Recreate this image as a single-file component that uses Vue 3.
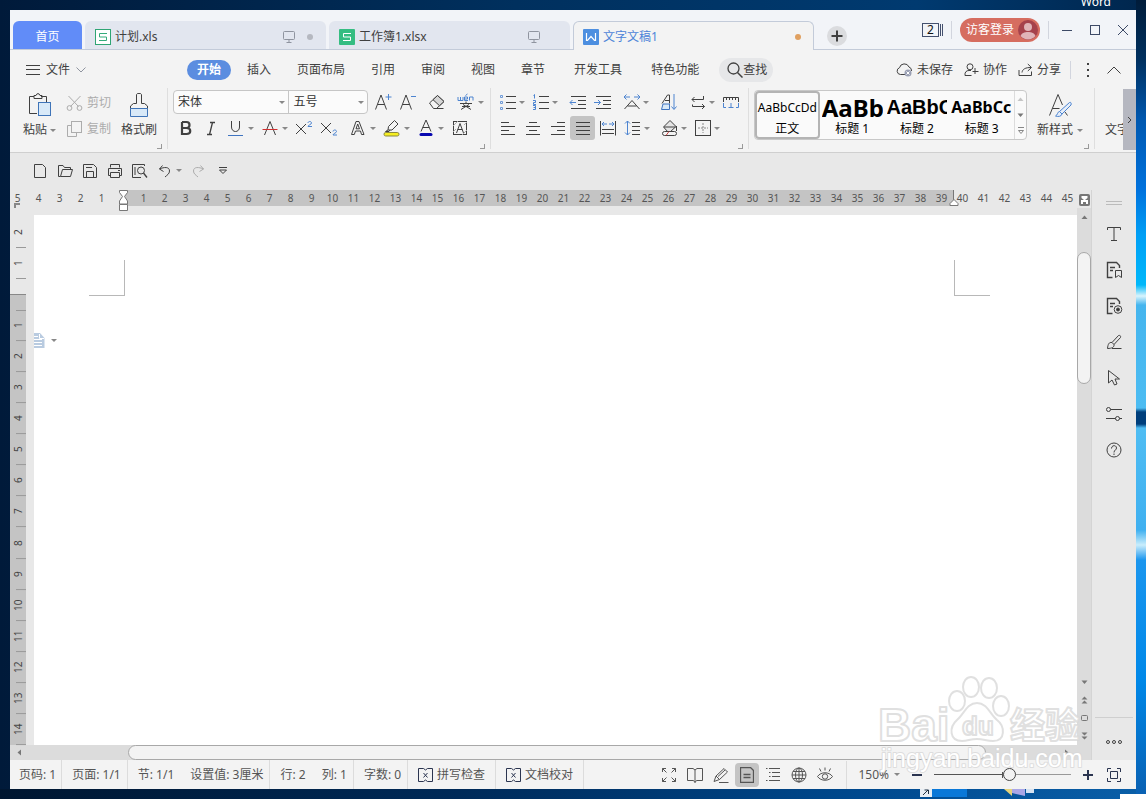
<script setup>
import { h, ref } from 'vue';

// [width, height, markup]
const icons = {
  xls: [16, 16, '<rect x=".5" y=".5" width="15" height="15" fill="#fff" stroke="#2fa574"/><path d="M12 4.5H4.5V8H11.5V11.5H4" stroke="#35ab7b"/>'],
  xlsx: [16, 16, '<rect width="16" height="16" rx="1" fill="#35bd82" stroke="none"/><path d="M12 4.5H4.5V8H11.5V11.5H4" stroke="#fff"/>'],
  doc: [16, 16, '<rect width="16" height="16" rx="1" fill="#4d8fe0" stroke="none"/><path d="M3.500 4V11.500H4.500L8 7.500L11.500 11.500H12.500V4" stroke="#fff" stroke-width="1.200"/>'],
  screen: [12, 12, '<rect x=".5" y=".5" width="11" height="8" rx="1"/><path d="M6 8.500V11.500M3.500 11.500H8.500"/>'],
  plus: [12, 12, '<path d="M6 .5V11.500M.5 6H11.500" stroke-width="2"/>'],
  user: [20, 20, '<circle cx="10" cy="10" r="10" fill="#a6424c" stroke="none"/><circle cx="10" cy="7" r="4" fill="#e0b4b8" stroke="none"/><path d="M2.500 16C4 10.500 16 10.500 17.500 16A10 10 0 0 1 2.500 16" fill="#e0b4b8" stroke="none"/>'],
  min: [10, 12, '<path d="M0 6.500H10"/>'],
  max: [10, 12, '<rect x=".5" y="1.500" width="9" height="9"/>'],
  close: [12, 12, '<path d="M1 1L11 11M11 1L1 11"/>'],
  menu: [14, 12, '<path d="M0 1.500H14M0 5.500H14M0 10.500H14"/>'],
  down: [10, 6, '<path d="M.5 .5L5 5L9.500 .5"/>'],
  up: [14, 8, '<path d="M.5 7.500L7 1L13.500 7.500"/>'],
  search: [16, 16, '<circle cx="6.500" cy="6.500" r="5.500" stroke-width="1.300"/><path d="M10.500 10.500L15.500 15.500" stroke-width="1.500"/>'],
  cloud: [17, 15, '<path d="M9 12.500H4.500A3.500 3.500 0 0 1 3.500 5.700A5 5 0 0 1 13 5A3.800 3.800 0 0 1 15.500 9"/><circle cx="12" cy="11" r="3.500" fill="#9aa0b4" stroke="none"/><path d="M10.500 9.500L13.500 12.500M13.500 9.500L10.500 12.500" stroke="#fff"/>'],
  collab: [15, 14, '<circle cx="6" cy="3.800" r="3"/><path d="M7.500 12.500H1C.5 9 2.500 7.500 5 7.500H7M11 5V11M8.500 8.500H14.500"/>'],
  share: [15, 14, '<path d="M1 7V12.500H13.500V8.500M4 9.500C4.500 6 7.500 4.500 13 4.500M9.800 1L13.500 4.500L9.800 8"/>'],
  more: [4, 14, '<path d="M1 1H3M1 7H3M1 13H3" stroke-width="2"/>'],
  paste: [24, 24, '<path d="M9 20.500H1.500V3.500H6M13 3.500H18.500V9"/><path d="M6 5.500V2.500H8L9 .8H11L12 2.500H14V5.500Z"/><rect x="10.500" y="9.500" width="12" height="13" fill="#d8e9f8" stroke="#3f74b8"/>'],
  cut: [18, 16, '<path d="M2.500 1L12.500 11.500M14.500 1L4.500 11.500"/><circle cx="3.500" cy="13" r="2.400"/><circle cx="13.500" cy="13" r="2.400"/>'],
  copy: [16, 16, '<path d="M5 4.500H1.500V15.500H10.500V11.500"/><rect x="5.500" y=".5" width="10" height="11"/>'],
  brush: [20, 24, '<path d="M7.500 10.500V1.500C7.500 0 12.500 0 12.500 1.500V10.500H15.500L18.500 13V15.500H1.500V13L4.500 10.500Z"/><path d="M1.500 15.500H18.500V23.500H1.500Z" fill="#d8e9f8" stroke="#3f74b8"/>'],
  bold: [14, 16, '<path d="M3 2V14H7.500C12.500 14 12.500 8 7.500 8H3M7.500 8C11.500 8 11.500 2 7.500 2H3" stroke-width="2.200"/>'],
  italic: [14, 16, '<path d="M6 2.500H11M3 14.500H8M8.500 2.500L5.500 14.500" stroke-width="1.300"/>'],
  underline: [16, 16, '<path d="M3.500 1V7C3.500 13 11.500 13 11.500 7V1"/><path d="M0 15.500H15" stroke="#3f74c0"/>'],
  strike: [16, 16, '<path d="M2.500 15L8 1.500L13.500 15"/><path d="M.5 9.500H15.500" stroke="#d03030"/>'],
  sup: [18, 16, '<path d="M1 4L11 14M11 4L1 14"/><path d="M13 3C13 1 16.500 1 16.500 3C16.500 4.500 13 5 13 6.500H17" stroke="#4d84d0"/>'],
  sub: [18, 16, '<path d="M1 3L11 13M11 3L1 13"/><path d="M13 11.500C13 9.500 16.500 9.500 16.500 11.500C16.500 13 13 13.500 13 15H17" stroke="#4d84d0"/>'],
  outlineA: [16, 16, '<path d="M1.500 14.500L6 1.500H9L14 14.500H11.500L10.500 11H5.500L4.300 14.500ZM6 8.800H9.500L7.700 4Z"/>'],
  marker: [18, 18, '<path d="M5.500 7.500L11.500 1.500L15 5L9 11H5ZM5 11L2.500 12.500H6L7 11"/><rect x="1" y="13.500" width="15" height="3.500" rx="1.700" fill="#f6ee20" stroke="#8b8940"/>'],
  colorA: [16, 18, '<path d="M3 12.500L8 1L13 12.500M4.800 8.500H11.200"/><rect x="1.500" y="14" width="13" height="3" rx="1.500" fill="#0808b0" stroke="none"/>'],
  boxA: [16, 16, '<rect x="1.500" y="1.500" width="13" height="13"/><path d="M1 6L6 1M10 15L15 10M1 12L4 9M12 5L15 2" stroke="#aaa"/><path d="M4.500 13L8 3.500L11.500 13M5.700 9.500H10.300"/>'],
  grow: [18, 18, '<path d="M1.500 16.500L7 2L12.500 16.500M3.500 11.500H10.500"/><path d="M14.500 1V7M11.500 4H17.500" stroke="#4d84d0"/>'],
  shrink: [18, 18, '<path d="M1.500 16.500L7 2L12.500 16.500M3.500 11.500H10.500"/><path d="M12 3.500H17" stroke="#4d84d0"/>'],
  eraser: [18, 16, '<path d="M1.500 9L9.500 1.500L16 7.500L8.500 14.500H5.500Z"/><path d="M9.500 1.500L16 7.500L11.500 11.700L5 5.700Z" fill="#d5d5d5"/><path d="M8 14.500H15.500"/>'],
  pinyin: [18, 18, '<path d="M1 4V7.500H6V4M3.500 4V7.500M7.500 6H10.500V4H7.500V7.500H11M8.500 2.500L10.500 1M12.500 7.500V4H16V7.500" stroke="#4d84d0"/><path d="M3 10.500H15M9 8.500V10.500M4 16.500L12 11.500M14 16.500L6 11.500M5 13.500H13"/>'],
  bullets: [18, 16, '<path d="M7 2.500H17M7 8.500H17M7 14.500H17" stroke-width="1.200"/><path d="M1.500 1.500H3.500V3.500H1.500ZM1.500 7.500H3.500V9.500H1.500ZM1.500 13.500H3.500V15.500H1.500Z" stroke="#6f9bd8"/>'],
  numbers: [18, 16, '<path d="M7 2.500H17M7 8.500H17M7 14.500H17" stroke-width="1.200"/><path d="M1.500 1.500L2.500 .5V4.500M1 6.500H3.500V8.500H1.500V10.500H4M1 11.500H3.500V15.500H1M1.500 13.500H3.500" stroke="#4d84d0"/>'],
  outdent: [18, 16, '<path d="M2 2.500H17M9 6.500H17M9 10.500H17M2 14.500H17" stroke-width="1.200"/><path d="M7 8.500H1M3.500 6L1 8.500L3.500 11" stroke="#4d84d0"/>'],
  indent: [18, 16, '<path d="M2 2.500H17M9 6.500H17M9 10.500H17M2 14.500H17" stroke-width="1.200"/><path d="M0 8.500H6.500M4 6L6.500 8.500L4 11" stroke="#4d84d0"/>'],
  charScale: [18, 16, '<path d="M1.500 15L9 6.500L16.500 15M4.500 12H13.500"/><path d="M1 3H7M3.500 .5L1 3L3.500 5.500M17 3H11M14.500 .5L17 3L14.500 5.500" stroke="#4d84d0"/>'],
  sort: [18, 18, '<path d="M2 10.500L7.500 2H9.500V10.500M5 7.500H9.500"/><path d="M3 11H9.500V16.500H1.500Z" stroke="#3f74c0" fill="#d8e9f8"/><path d="M14 1V16M11.500 13.500L14 16.500L16.500 13.500" stroke="#4d84d0"/>'],
  wrap: [16, 16, '<path d="M13.500 2V5.500H2M4.500 3L2 5.500L4.500 8M2.500 10.500V12.500H14.500M12 10L14.500 12.500L12 15"/>'],
  tabs: [18, 14, '<path d="M1.500 7V2.500H16.500V7M4.500 3V5M7.500 3V5M10.500 3V5M13.500 3V5"/><path d="M1.500 8V12.500H4M16.500 8V12.500H14M9 8V12.500M6.500 12.500H11.500" stroke="#4d84d0"/>'],
  left: [16, 16, '<path d="M1 2.500H9M1 6.500H15M1 10.500H9M1 14.500H15" stroke-width="1.200"/>'],
  center: [16, 16, '<path d="M4 2.500H12M1 6.500H15M4 10.500H12M1 14.500H15" stroke-width="1.200"/>'],
  right: [16, 16, '<path d="M7 2.500H15M1 6.500H15M7 10.500H15M1 14.500H15" stroke-width="1.200"/>'],
  justify: [16, 16, '<path d="M1 2.500H15M1 6.500H15M1 10.500H15M1 14.500H15" stroke-width="1.200"/>'],
  distribute: [18, 16, '<path d="M1.500 1V15.500M16.500 1V15.500M3 9.500H15M3 13.500H15"/><path d="M3.500 4H8M5 2L3 4L5 6M14.500 4H10M13 2L15 4L13 6" stroke="#4d84d0"/>'],
  spacing: [18, 16, '<path d="M8 2.500H16M8 6.500H16M8 10.500H16M8 14.500H16" stroke-width="1.200"/><path d="M3.500 1V15M1 3.500L3.500 1L6 3.500M1 12.500L3.500 15L6 12.500" stroke="#4d84d0"/>'],
  fill: [18, 18, '<path d="M2.500 8L9 1.500L15 7.500L9 13H7Z" fill="#e4e4e4"/><path d="M3 8H14.500"/><rect x="1.500" y="12.500" width="14" height="4" rx="2" fill="#f3f3f3"/><path d="M5 16.500L8 12.500" stroke="#c44"/><path d="M15.500 7V12"/>'],
  borders: [16, 16, '<rect x=".5" y=".5" width="15" height="15"/><path d="M8 3V13M3 8H13" stroke="#888" stroke-dasharray="2 1"/>'],
  newStyle: [26, 24, '<path d="M2.500 22.500L11 1.500L15.500 12M5.500 15.500H12.500M18 19L20.500 22.500"/><path d="M22.500 9.500L12.500 18.500L15 21L24 12C24.500 10 24 9 22.500 9.500M12.500 18.500C10 19 11 22 8.500 23C11 24 14.500 23.500 15 21" stroke="#4d84d0" fill="#e6eefa"/>'],
  newDoc: [14, 16, '<path d="M1.500 1.500V14.500H12.500V4.500L9.500 1.500H1.500Z" stroke-linejoin="round"/>'],
  open: [16, 16, '<path d="M3.500 13.500H1.500V2.500H6L7.500 4.500H13.500V6.500M3.500 13.500L5.500 6.500H15.500L13.500 13.500Z"/>'],
  save: [16, 16, '<path d="M1.500 1.500H11.500L14.500 4.500V14.500H1.500ZM4.500 14V8.500H11.500V14M4 4.500H10"/>'],
  print: [16, 16, '<path d="M3.500 4.500V1.500H12.500V4.500M3.500 12.500H1.500V5.500H14.500V12.500H12.500M3.500 9.500H12.500V14.500H3.500ZM11 7.500H13"/>'],
  preview: [18, 16, '<path d="M10 14.500H1.500V1.500H13.500V3M4 4V12"/><circle cx="10" cy="7.500" r="3.500"/><path d="M12.500 10L16 14.500" stroke-width="1.300"/>'],
  undo: [14, 14, '<path d="M4.500 1.500L1.500 5L5.500 7.500M1.500 5C6 3 11.500 2.500 11.500 7C11.500 10 9 11 7 13"/>'],
  redo: [14, 14, '<path d="M9.500 1.500L12.500 5L8.500 7.500M12.500 5C8 3 2.500 2.500 2.500 7C2.500 10 5 11 7 13"/>'],
  customize: [10, 8, '<path d="M1 .5H9M1.500 3L5 6.500L8.500 3Z"/>'],
  hourglass: [11, 22, '<path d="M1.500 .5H9.500V2.500L6.500 6.500L9.500 11V14H1.500V11L4.500 6.500L1.500 2.500ZM1.500 14.500H9.500V20.500H1.500Z" fill="#fff" stroke="#777"/>'],
  rightIndent: [10, 17, '<path d="M4.500 0V10" stroke="#777"/><path d="M1 15.500V13.500L5 9.500L9 13.500V15.500Z" fill="#fff" stroke="#777"/>'],
  tabStop: [7, 5, '<path d="M1 5V1H6" stroke="#888" stroke-width="2"/>'],
  rulerToggle: [11, 12, '<rect x=".5" y=".5" width="10" height="11" rx="1" fill="#777" stroke="#777"/><path d="M2.500 2H8.500V4L6 6H9V10H7V8H4V10H2V6H5L2.500 4Z" fill="#fff" stroke="none"/>'],
  pasteOpt: [11, 15, '<path d="M0 0H6L10.500 5V15H0Z" fill="#b9cbe0" stroke="none"/><path d="M0 3.500H4M0 6.500H8M0 9.500H8M0 12.500H8M5.500 1V5.500H10" stroke="#fff"/>'],
  text: [16, 16, '<path d="M1.500 4V1.500H14.500V4M8 1.500V14.500M5 14.500H11"/>'],
  bookmark: [18, 18, '<path d="M7.500 16.500H2.500V1.500H11.500L14.500 4.500V7M5 6.500H10M5 9.500H8" stroke-width="1.400"/><path d="M10.500 9.500H16.500V16.500L13.500 14.500L10.500 16.500Z"/>'],
  record: [18, 18, '<path d="M7.500 16.500H2.500V1.500H11.500L14.500 4.500V7M5 6.500H10M5 9.500H8" stroke-width="1.400"/><circle cx="13" cy="12.500" r="3.800"/><circle cx="13" cy="12.500" r="1.500" fill="#333"/>'],
  paint: [18, 16, '<path d="M7 8.500L13.500 1.500C15 1 16 2 15.500 3.500L9 10.500ZM7 8.500C4 8 3 10 2.500 14.500C7 14.500 9.500 13 9 10.500M7 14.500H16.500"/>'],
  pointer: [14, 18, '<path d="M1.500 1.500V14L5 11L7.500 16L10 15L8 10H12.500Z"/>'],
  sliders: [18, 16, '<circle cx="3.500" cy="3.500" r="2"/><circle cx="12.500" cy="12.500" r="2"/><path d="M5.500 3.500H17M1 12.500H10.500M14.500 12.500H17"/>'],
  help: [16, 16, '<circle cx="8" cy="8" r="7"/><path d="M5.500 6.500C5.500 2.800 10.500 2.800 10.500 6C10.500 8 8 8 8 10.500M8 11.500V13"/>'],
  dots: [18, 6, '<circle cx="3" cy="3" r="1.500"/><circle cx="9" cy="3" r="1.500"/><circle cx="15" cy="3" r="1.500"/>'],
  spell: [15, 16, '<path d="M5.500 1.500H.5V14.500H5.500L7.500 13L9.500 14.500H14.500V1.500H9.500L7.500 3L5.500 1.500M5.500 6L9.500 10.500M9.500 6L5.500 10.500" stroke="#2b3550"/>'],
  fullscreen: [16, 16, '<path d="M1.500 5V1.500H5M11 1.500H14.500V5M14.500 11V14.500H11M5 14.500H1.500V11M1.500 1.500L5.500 5.500M14.500 1.500L10.500 5.500M14.500 14.500L10.500 10.500M1.500 14.500L5.500 10.500"/>'],
  book: [16, 16, '<path d="M8 3V15.500L6.500 13.500H.5V1.500H6L8 3L10 1.500H15.500V13.500H9.500L8 15.500"/>'],
  pen: [18, 16, '<path d="M2 14.500L4 9L12 1.500L15.500 5L7.500 12.500ZM4 9L7.500 12.500M6 9.500L13 3M7 15.500H16.500"/>'],
  pageView: [14, 16, '<path d="M.5 .5H10.500L13.500 3.500V15.500H.5ZM3.500 7.500H10.500M3.500 10.500H10.500" stroke-width="1.300"/>'],
  outline: [16, 16, '<path d="M4 1.500H15M7 5.500H15M7 9.500H15M4 13.500H15M1 1.500H2.500M4 5.500H5.500M4 9.500H5.500M1 13.500H2.500"/>'],
  globe: [16, 16, '<circle cx="8" cy="8" r="7"/><ellipse cx="8" cy="8" rx="3.500" ry="7"/><path d="M1 8H15M8 1V15M2 4.500H14M2 11.500H14"/>'],
  eye: [18, 18, '<path d="M1.500 10.500C5 5.500 13 5.500 16.500 10.500C13 15.500 5 15.500 1.500 10.500ZM9 1.500V4.500M3.500 2.500L5 5.500M14.500 2.500L13 5.500"/><circle cx="9" cy="10.500" r="2.700"/>'],
  fit: [14, 14, '<path d="M.5 4V.5H4M10 .5H13.500V4M13.500 10V13.500H10M4 13.500H.5V10M3.500 3.500H10.500V10.500H3.500Z"/>'],
  zoomOut: [10, 12, '<path d="M0 6H10" stroke-width="2"/>'],
  zoomIn: [10, 12, '<path d="M0 6H10M5 1V11" stroke-width="2"/>'],
  arrowUp: [7, 6, '<path d="M.5 5L3.500 1.500L6.500 5Z" fill="#777" stroke="none"/>'],
  arrowDown: [7, 6, '<path d="M.5 1.500L3.500 5L6.500 1.500Z" fill="#777" stroke="none"/>'],
  arrowLeft: [6, 7, '<path d="M5 .5L1.500 3.500L5 6.500Z" fill="#777" stroke="none"/>'],
  arrowRight: [6, 7, '<path d="M1 .5L4.500 3.500L1 6.500Z" fill="#777" stroke="none"/>'],
  prevPage: [7, 8, '<path d="M.5 3.500L3.500 .5L6.500 3.500ZM.5 7.500L3.500 4.500L6.500 7.500Z" fill="#777" stroke="none"/>'],
  nextPage: [7, 8, '<path d="M.5 .5L3.500 3.500L6.500 .5ZM.5 4.500L3.500 7.500L6.500 4.500Z" fill="#777" stroke="none"/>'],
  browse: [7, 8, '<rect x=".5" y="1.500" width="6" height="5" rx="1" stroke="#777"/>'],
  galleryMore: [8, 8, '<path d="M1 .5H7M1.500 3.500H6.500L4 6.500Z" stroke="#888"/>'],
  expand: [5, 8, '<path d="M1 1L4 4L1 7"/>'],
};

const Icon = (props) => {
  const [width, height, innerHTML] = icons[props.name];
  return h('svg', {
    class: 'icon',
    width,
    height,
    viewBox: `0 0 ${width} ${height}`,
    fill: 'none',
    stroke: 'currentColor',
    'aria-hidden': true,
    innerHTML,
  });
};
Icon.props = ['name'];

const menus = ['开始', '插入', '页面布局', '引用', '审阅', '视图', '章节', '开发工具', '特色功能'];
const activeMenu = ref('开始');

const fontRow1 = [
  { icon: 'grow', label: '增大字号' },
  { icon: 'shrink', label: '减小字号' },
  { icon: 'eraser', label: '清除格式', gap: true },
  { icon: 'pinyin', label: '拼音指南', caret: true, gap: true },
];
const fontRow2 = [
  { icon: 'bold', label: '加粗' },
  { icon: 'italic', label: '倾斜' },
  { icon: 'underline', label: '下划线', caret: true },
  { icon: 'strike', label: '删除线', caret: true },
  { icon: 'sup', label: '上标' },
  { icon: 'sub', label: '下标' },
  { icon: 'outlineA', label: '文字效果', caret: true, gap: true },
  { icon: 'marker', label: '突出显示', caret: true },
  { icon: 'colorA', label: '字体颜色', caret: true },
  { icon: 'boxA', label: '字符底纹' },
];
const paraRow1 = [
  { icon: 'bullets', label: '项目符号', caret: true },
  { icon: 'numbers', label: '编号', caret: true },
  { icon: 'outdent', label: '减少缩进量', gap: true },
  { icon: 'indent', label: '增加缩进量' },
  { icon: 'charScale', label: '中文版式', caret: true, gap: true },
  { icon: 'sort', label: '排序', gap: true },
  { icon: 'wrap', label: '显示段落标记', caret: true, gap: true },
  { icon: 'tabs', label: '制表位' },
];
const paraRow2 = [
  { icon: 'left', label: '左对齐' },
  { icon: 'center', label: '居中' },
  { icon: 'right', label: '右对齐' },
  { icon: 'justify', label: '两端对齐', active: true },
  { icon: 'distribute', label: '分散对齐' },
  { icon: 'spacing', label: '行距', caret: true },
  { icon: 'fill', label: '底纹', caret: true, gap: true },
  { icon: 'borders', label: '边框', caret: true },
];
const styleList = [
  { name: '正文', sample: 'AaBbCcDd', cls: 'body' },
  { name: '标题 1', sample: 'AaBb', cls: 'h1' },
  { name: '标题 2', sample: 'AaBbC', cls: 'h2' },
  { name: '标题 3', sample: 'AaBbCc', cls: 'h3' },
];
const quick = [
  { icon: 'newDoc', label: '新建' },
  { icon: 'open', label: '打开' },
  { icon: 'save', label: '保存' },
  { icon: 'print', label: '打印' },
  { icon: 'preview', label: '打印预览' },
  { icon: 'undo', label: '撤销', caret: true },
  { icon: 'redo', label: '恢复', disabled: true },
  { icon: 'customize', label: '自定义' },
];
const sideTools = [
  { icon: 'text', label: '文字' },
  { icon: 'bookmark', label: '书签' },
  { icon: 'record', label: '属性' },
  { icon: 'paint', label: '样式' },
  { icon: 'pointer', label: '选择' },
  { icon: 'sliders', label: '设置' },
  { icon: 'help', label: '帮助' },
];
const views = [
  { icon: 'fullscreen', label: '全屏' },
  { icon: 'book', label: '阅读版式' },
  { icon: 'pen', label: '写作模式' },
  { icon: 'pageView', label: '页面视图', active: true },
  { icon: 'outline', label: '大纲' },
  { icon: 'globe', label: 'Web 版式' },
  { icon: 'eye', label: '护眼模式' },
];

const rulerMarks = [5, 4, 3, 2, 1, ''];
for (let i = 1; i <= 45; i++) rulerMarks.push(i);

const zoom = ref(56);
</script>

<template>
  <div class="desktop">
    <span class="desk-label">Word</span>
    <svg class="desk-icons" width="226" height="10" viewBox="0 0 226 10" aria-hidden="true">
      <rect x="12" width="35" height="8" fill="#0a78d8" />
      <rect x="0" width="12" height="8" fill="#e8eef4" />
      <path d="M3 6L8 1M4.500 1H8.500V5" stroke="#234" fill="none" />
      <path d="M84 0L92 7V0Z" fill="#e5d37a" />
      <path d="M92 0H105V7L92 4Z" fill="#a9a6e6" />
      <path d="M106 0H114V4H106Z" fill="#d5e2f2" />
      <rect x="200" y="5" width="26" height="5" fill="#fff" />
    </svg>

    <div class="window">
      <header class="titlebar">
        <nav class="tabs">
          <button class="tab home">首页</button>
          <button class="tab">
            <Icon name="xls" /><span class="tab-name">计划.xls</span>
            <Icon name="screen" class="faint" /><i class="dot"></i>
          </button>
          <button class="tab">
            <Icon name="xlsx" /><span class="tab-name">工作簿1.xlsx</span>
            <Icon name="screen" class="faint no-dot" />
          </button>
          <button class="tab current">
            <Icon name="doc" /><span class="tab-name">文字文稿1</span>
            <i class="dot orange"></i>
          </button>
          <button class="add" aria-label="新建标签"><Icon name="plus" /></button>
        </nav>
        <div class="win-tools">
          <button class="count"><b>2</b><i></i><i></i></button>
          <span class="bar"></span>
          <button class="login">访客登录<Icon name="user" /></button>
          <span class="bar"></span>
          <button class="win-btn" aria-label="最小化"><Icon name="min" /></button>
          <button class="win-btn" aria-label="最大化"><Icon name="max" /></button>
          <button class="win-btn" aria-label="关闭"><Icon name="close" /></button>
        </div>
      </header>

      <div class="menubar">
        <button class="file"><Icon name="menu" />文件<Icon name="down" class="faint" /></button>
        <nav class="menus">
          <button
            v-for="m in menus"
            :key="m"
            class="menu"
            :class="{ on: m === activeMenu, long: m === '开发工具' || m === '特色功能' }"
            @click="activeMenu = m"
          >{{ m }}</button>
        </nav>
        <button class="find"><Icon name="search" />查找</button>
        <div class="menu-right">
          <button><Icon name="cloud" />未保存</button>
          <button><Icon name="collab" />协作</button>
          <button><Icon name="share" />分享</button>
          <span class="bar"></span>
          <button class="dots" aria-label="更多"><Icon name="more" /></button>
          <button aria-label="折叠功能区"><Icon name="up" /></button>
        </div>
      </div>

      <div class="ribbon">
        <section class="group clip">
          <div class="group-body">
            <button class="big"><Icon name="paste" /><span>粘贴<i class="caret"></i></span></button>
            <div class="stack">
              <button disabled><Icon name="cut" />剪切</button>
              <button disabled><Icon name="copy" />复制</button>
            </div>
            <button class="big"><Icon name="brush" /><span>格式刷</span></button>
          </div>
          <i class="launcher"></i>
        </section>

        <section class="group font">
          <div class="rows">
            <div class="row">
              <div class="combo">
                <div class="drop family">
                  <select aria-label="字体"><option>宋体</option></select><i class="caret"></i>
                </div>
                <div class="drop size">
                  <select aria-label="字号"><option>五号</option></select><i class="caret"></i>
                </div>
              </div>
              <button v-for="t in fontRow1" :key="t.icon" class="tool" :class="{ wide: t.caret, gap: t.gap }" :aria-label="t.label">
                <Icon :name="t.icon" /><i v-if="t.caret" class="caret"></i>
              </button>
            </div>
            <div class="row">
              <button v-for="t in fontRow2" :key="t.icon" class="tool" :class="{ wide: t.caret, gap: t.gap }" :aria-label="t.label">
                <Icon :name="t.icon" /><i v-if="t.caret" class="caret"></i>
              </button>
            </div>
          </div>
          <i class="launcher"></i>
        </section>

        <section class="group para">
          <div class="rows">
            <div v-for="(r, n) in [paraRow1, paraRow2]" :key="n" class="row">
              <button
                v-for="t in r"
                :key="t.icon"
                class="tool"
                :class="{ wide: t.caret, gap: t.gap, active: t.active }"
                :aria-label="t.label"
              >
                <Icon :name="t.icon" /><i v-if="t.caret" class="caret"></i>
              </button>
            </div>
          </div>
          <i class="launcher"></i>
        </section>

        <section class="group styles">
          <div class="group-body">
            <div class="gallery">
              <button v-for="s in styleList" :key="s.name" class="style" :class="s.cls">
                <span class="sample">{{ s.sample }}</span>
                <span class="style-name">{{ s.name }}</span>
              </button>
              <div class="gallery-nav">
                <button aria-label="上一行" disabled><Icon name="arrowUp" /></button>
                <button aria-label="下一行"><Icon name="arrowDown" /></button>
                <button aria-label="全部样式"><Icon name="galleryMore" /></button>
              </div>
            </div>
            <button class="big new-style"><Icon name="newStyle" /><span>新样式<i class="caret"></i></span></button>
          </div>
          <i class="launcher"></i>
        </section>

        <section class="group last"><span>文字</span></section>
        <button class="scroll-ribbon" aria-label="向右滚动"><Icon name="expand" /></button>
      </div>

      <div class="quickbar">
        <button v-for="q in quick" :key="q.icon" class="tool" :class="{ wide: q.caret }" :disabled="q.disabled" :aria-label="q.label">
          <Icon :name="q.icon" /><i v-if="q.caret" class="caret"></i>
        </button>
      </div>

      <main class="editor">
        <div class="sheet">
          <div class="ruler">
            <span v-for="(n, i) in rulerMarks" :key="i">{{ n }}</span>
            <Icon name="tabStop" class="tab-stop" />
            <Icon name="hourglass" class="indent-left" />
            <Icon name="rightIndent" class="indent-right" />
          </div>
          <div class="canvas">
            <div class="vruler">
              <span>2</span><span>1</span>
              <div class="vruler-text"><span v-for="n in 14" :key="n">{{ n }}</span></div>
            </div>
            <div class="page">
              <div class="corners"><i class="corner"></i><i class="corner end"></i></div>
              <button class="paste-options" aria-label="粘贴选项"><Icon name="pasteOpt" /><i class="caret"></i></button>
            </div>
          </div>
        </div>
        <div class="vscroll">
          <button class="toggle" aria-label="标尺"><Icon name="rulerToggle" /></button>
          <button aria-label="向上"><Icon name="arrowUp" /></button>
          <div class="vtrack"><div class="vthumb"></div></div>
          <button aria-label="向下"><Icon name="arrowDown" /></button>
          <button aria-label="上一页"><Icon name="prevPage" /></button>
          <button aria-label="浏览"><Icon name="browse" /></button>
          <button aria-label="下一页"><Icon name="nextPage" /></button>
        </div>
        <div class="hscroll">
          <button aria-label="向左"><Icon name="arrowLeft" /></button>
          <div class="htrack"><div class="hthumb"></div></div>
          <button aria-label="向右"><Icon name="arrowRight" /></button>
        </div>
        <aside class="side">
          <i class="grip"></i>
          <button v-for="s in sideTools" :key="s.icon" :aria-label="s.label"><Icon :name="s.icon" /></button>
          <button class="side-more" aria-label="更多工具"><Icon name="dots" /></button>
        </aside>
      </main>

      <footer class="status">
        <span class="cell">页码: 1</span>
        <span class="cell">页面: 1/1</span>
        <span class="cell"><span>节: 1/1</span><span>设置值: 3厘米</span></span>
        <span class="cell"><span>行: 2</span><span>列: 1</span></span>
        <span class="cell">字数: 0</span>
        <button class="cell check"><Icon name="spell" />拼写检查</button>
        <button class="cell check"><Icon name="spell" />文档校对</button>
        <div class="status-right">
          <div class="views">
            <button v-for="v in views" :key="v.icon" :class="{ active: v.active }" :aria-label="v.label"><Icon :name="v.icon" /></button>
          </div>
          <button class="percent">150%<i class="caret"></i></button>
          <button class="zoom-btn" aria-label="缩小"><Icon name="zoomOut" /></button>
          <input v-model="zoom" class="zoom" type="range" min="0" max="100" aria-label="显示比例">
          <button class="zoom-btn" aria-label="放大"><Icon name="zoomIn" /></button>
          <button class="fit" aria-label="适合窗口"><Icon name="fit" /></button>
        </div>
      </footer>
    </div>

    <svg class="watermark" width="212" height="106" viewBox="0 0 212 106" aria-hidden="true">
      <g class="mark">
        <text x="0" y="71" class="wm-bai">Bai</text>
        <ellipse cx="79" cy="31" rx="8" ry="10" />
        <ellipse cx="93" cy="17" rx="8" ry="10" />
        <ellipse cx="111" cy="18" rx="8" ry="10" />
        <ellipse cx="123" cy="36" rx="8" ry="10" />
        <path d="M99 33C109 33 112 44 119 50C127 56 128 71 115 71C108 71 106 69 99 69C92 69 90 71 84 71C71 71 71 57 79 50C86 44 89 33 99 33Z" />
        <text x="84" y="65" class="wm-du">du</text>
        <text x="132" y="68" class="wm-cn">经验</text>
        <text x="3" y="97" class="wm-url">jingyan.baidu.com</text>
      </g>
    </svg>
  </div>
</template>

<style>
body {
  margin: 0;
  overflow: hidden;
}
</style>

<style scoped>
.desktop {
  position: relative;
  box-sizing: border-box;
  display: flex;
  height: 100vh;
  padding: 10px;
  overflow: hidden;
  font: 12px/16px "Noto Sans", "Noto Sans CJK SC", sans-serif;
  color: #404040;
  background:
    linear-gradient(#001c3a 0, #00305f 60px, #0058b0 120px, #0072dd 190px, #009ff5 235px, #00b8fa 285px, #d9f4fd 296px, #45b5ee 305px, #4cbcf2 408px, #003f7c 412px, #003f7c 424px, #4fbdf3 428px, #3fb0f0 530px, #c9edfc 545px, #1b96ee 560px, #0088e8 680px, #0a5fb0 100%) right / 10px 100% no-repeat,
    linear-gradient(90deg, #001630, #002a58 40%, #00498e 75%, #0a5fa8) bottom / 100% 10px no-repeat,
    linear-gradient(90deg, #001a3a, #00305e 45%, #003a70 80%, #00264d);
}
.desk-label {
  position: absolute;
  top: -6px;
  right: 35px;
  color: #fff;
}
.desk-icons {
  position: absolute;
  right: 0;
  bottom: 0;
}
.window {
  position: relative;
  flex: 1;
  min-width: 0;
  display: flex;
  flex-direction: column;
  background: #f3f3f3;
}
button {
  display: flex;
  align-items: center;
  padding: 0;
  border: 0;
  background: none;
  color: inherit;
  font: inherit;
  white-space: nowrap;
}
button:disabled {
  color: #acacac;
}
.icon {
  flex: none;
  display: block;
}
.caret {
  flex: none;
  border: 3px solid transparent;
  border-top-color: #888;
  border-bottom: 0;
}
.bar {
  width: 1px;
  height: 18px;
  background: #d2d5de;
}
.faint {
  color: #8f949f;
}

/* title bar */
.titlebar {
  display: flex;
  justify-content: space-between;
  height: 39px;
  border-bottom: 1px solid #c3cbd9;
  background: #f2f4f8;
}
.tabs {
  flex: 1;
  box-sizing: border-box;
  max-width: 837px;
  display: flex;
  gap: 3px;
  padding: 11px 0 0 3px;
}
.tab {
  flex: 1;
  box-sizing: border-box;
  height: 28px;
  padding: 3px 13px 0 10px;
  gap: 4px;
  border-radius: 6px 6px 0 0;
  background: #e2e6ef;
}
.tab.home {
  flex: 0 0 69px;
  justify-content: center;
  padding: 3px 0 0;
  background: #618cf8;
  color: #fff;
}
.tab.current {
  height: 29px;
  padding: 2px 12px 0 9px;
  border: 1px solid #c3cbd9;
  border-bottom: 0;
  background: #f3f3f3;
  color: #4d84d8;
}
.tab-name {
  flex: 1;
  text-align: left;
}
.dot {
  width: 6px;
  height: 6px;
  margin-left: 8px;
  border-radius: 50%;
  background: #b5b8c0;
}
.dot.orange {
  background: #e0a060;
}
.no-dot {
  margin-right: 17px;
}
.add {
  justify-content: center;
  width: 20px;
  height: 20px;
  margin: 5px 0 0 10px;
  border-radius: 50%;
  background: #dbdcdf;
}
.win-tools {
  display: flex;
  align-items: center;
  gap: 8px;
  padding-right: 3px;
}
.count {
  gap: 1px;
}
.count b {
  width: 15px;
  border: 1px solid #44506e;
  line-height: 12px;
  font-weight: 400;
  color: #111;
}
.count i {
  width: 1px;
  height: 12px;
  background: #44506e;
}
.login {
  height: 24px;
  padding: 0 2px 0 6px;
  gap: 4px;
  border-radius: 12px;
  background: #d66d60;
  color: #fff;
}
.win-btn {
  justify-content: center;
  width: 20px;
  color: #3d4a66;
}

/* menu bar */
.menubar {
  display: flex;
  align-items: center;
  box-sizing: border-box;
  height: 38px;
  padding-top: 1px;
}
.file {
  width: 177px;
  box-sizing: border-box;
  padding-left: 16px;
  gap: 6px;
}
.menus {
  display: flex;
}
.menu {
  height: 20px;
  padding: 0 13px;
}
.menu.on {
  margin-right: 3px;
  padding: 0 10px;
  border-radius: 10px;
  background: #5b8de0;
  color: #fff;
  font-weight: 700;
}
.menu.long {
  margin-left: 3px;
}
.find {
  height: 24px;
  margin-left: 7px;
  padding: 0 6px 0 8px;
  border-radius: 12px;
  background: #e6e7e9;
}
.menu-right {
  flex: 1;
  display: flex;
  align-items: center;
  justify-content: flex-end;
  gap: 11px;
  padding-right: 15px;
}
.menu-right button {
  gap: 4px;
}
.menu-right .bar {
  margin: 0 4px 0 -2px;
}
.menu-right .dots {
  margin-right: 6px;
}

/* ribbon */
.ribbon {
  display: flex;
  height: 64px;
  border-bottom: 1px solid #cfcfcf;
}
.group {
  flex: none;
  display: flex;
  flex-direction: column;
  box-sizing: border-box;
  height: 61px;
  padding: 1px 5px 0;
  border-right: 1px solid #dedede;
}
.launcher {
  align-self: flex-end;
  width: 4px;
  height: 4px;
  margin-top: 3px;
  border: solid #999;
  border-width: 0 1px 1px 0;
}
.group-body {
  display: flex;
  height: 52px;
}
.clip {
  width: 158px;
  padding-left: 13px;
}
.clip .group-body {
  gap: 10px;
}
.big {
  flex-direction: column;
  justify-content: space-between;
  box-sizing: border-box;
  height: 52px;
  padding: 4px 0 3px;
}
.big span {
  display: flex;
  align-items: center;
  gap: 3px;
}
.stack {
  display: flex;
  flex-direction: column;
}
.stack button {
  width: 45px;
  height: 26px;
  padding-top: 1px;
  justify-content: space-between;
}
.rows {
  display: flex;
  flex-direction: column;
}
.row {
  display: flex;
  align-items: center;
  height: 26px;
}
.font {
  width: 323px;
}
.para {
  width: 258px;
  padding-left: 4px;
}
.combo {
  flex: none;
  display: flex;
  width: 195px;
  height: 24px;
  margin-right: 2px;
  box-sizing: border-box;
  border: 1px solid #c6c6c6;
  border-radius: 4px;
  background: #fbfbfb;
}
.drop {
  display: grid;
  align-items: center;
}
.drop.family {
  flex: 115;
  border-right: 1px solid #c6c6c6;
}
.drop.size {
  flex: 78;
}
.drop select {
  grid-area: 1 / 1;
  width: 100%;
  padding: 0 4px;
  border: 0;
  appearance: none;
  background: none;
  color: #333;
  font: inherit;
}
.drop .caret {
  grid-area: 1 / 1;
  justify-self: end;
  margin-right: 3px;
  pointer-events: none;
}
.tool {
  flex: none;
  display: grid;
  grid-template-columns: 25px auto;
  justify-items: center;
  width: 25px;
  height: 24px;
}
.tool.wide {
  width: 33px;
}
.font .tool.wide {
  width: 34px;
}
.tool .caret {
  margin-left: -4px;
}
.tool.gap {
  margin-left: 4px;
}
.tool.active {
  border-radius: 3px;
  background: #c4c4c4;
}
.styles {
  width: 346px;
}
.gallery {
  display: flex;
  box-sizing: border-box;
  width: 273px;
  min-width: 0;
  flex: none;
  height: 50px;
  margin-top: 1px;
  border: 1px solid #c8c8c8;
  border-radius: 4px;
  background: #fafafa;
}
.style {
  flex: 1 1 0;
  min-width: 0;
  flex-direction: column;
  box-sizing: border-box;
  padding: 2px;
  overflow: hidden;
  color: #000;
}
.style.body {
  border: 2px solid #b4b4b4;
  border-radius: 4px;
  padding: 0;
}
.sample {
  width: 100%;
  height: 29px;
  overflow: hidden;
  line-height: 29px;
  text-align: left;
  font-weight: 700;
}
.body .sample {
  text-align: center;
  font-weight: 400;
}
.h1 .sample {
  font-size: 24px;
}
.h2 .sample {
  font: 700 20px/29px "Liberation Sans", sans-serif;
}
.h3 .sample {
  font-size: 16px;
}
.gallery-nav {
  flex: none;
  width: 11px;
  display: flex;
  flex-direction: column;
  border-left: 1px solid #dcdcdc;
}
.gallery-nav button {
  flex: 1;
  justify-content: center;
}
.gallery-nav button:disabled {
  opacity: 0.4;
}
.new-style {
  margin-left: 10px;
}
.new-style span {
  gap: 4px;
}
.last {
  flex: 1;
  min-width: 0;
  overflow: hidden;
  justify-content: flex-end;
  padding: 0 0 11px 10px;
  border: 0;
  white-space: nowrap;
}
.scroll-ribbon {
  flex: 0 0 13px;
  justify-content: center;
  height: 61px;
  margin-top: 1px;
  background: #b5b7c0;
}

/* quick access */
.quickbar {
  display: flex;
  align-items: center;
  box-sizing: border-box;
  height: 37px;
  padding: 0 0 2px 17px;
  background: #e8e8e8;
}

/* document */
.editor {
  flex: 1;
  min-height: 0;
  display: grid;
  grid-template: minmax(0, 1fr) 15px / minmax(0, 1fr) 14px 45px;
  background: #e8e8e8;
}
.sheet {
  display: flex;
  flex-direction: column;
  min-height: 0;
}
.ruler {
  position: relative;
  display: flex;
  height: 25px;
  font-size: 10px;
  line-height: 16px;
  color: #555;
  background: linear-gradient(#c4c4c4, #c4c4c4) 113px 0 / 831px 16px no-repeat;
}
.ruler span {
  flex: 0 0 21px;
  text-align: center;
}
.ruler span:first-child {
  flex-basis: 18px;
  text-indent: -3px;
}
.tab-stop {
  position: absolute;
  left: 4px;
  top: 13px;
}
.indent-left {
  position: absolute;
  left: 108px;
  top: 0;
}
.indent-right {
  position: absolute;
  left: 939px;
  top: 0;
}
.canvas {
  flex: 1;
  min-height: 0;
  display: flex;
}
.vruler {
  display: flex;
  flex-direction: column;
  width: 16px;
  margin-right: 8px;
  padding-top: 2px;
  font-size: 10px;
  line-height: 16px;
  color: #444;
}
.vruler span {
  flex: 0 0 31px;
  box-sizing: border-box;
  writing-mode: vertical-rl;
  transform: rotate(180deg);
  text-align: center;
  background: linear-gradient(#999, #999) left top / 10px 1px no-repeat;
}
.vruler-text {
  flex: 1;
  display: flex;
  flex-direction: column;
  margin-top: 15px;
  padding-top: 15px;
  border-top: 1px solid #888;
  background: linear-gradient(#999, #999) right 15px / 10px 1px no-repeat #c4c4c4;
}
.vruler-text span {
  flex: 1;
}
.page {
  flex: 1;
  background: #fff;
}
.corners {
  display: flex;
  justify-content: space-between;
  padding: 45px 87px 0 55px;
}
.corner {
  width: 35px;
  height: 35px;
  border: solid #b8b8b8;
  border-width: 0 1px 1px 0;
}
.corner.end {
  border-width: 0 0 1px 1px;
}
.paste-options {
  margin-top: 37px;
  gap: 6px;
}
.vscroll {
  display: flex;
  flex-direction: column;
  background: #dcdcdc;
}
.vscroll button {
  flex: 0 0 18px;
  justify-content: center;
}
.vscroll .toggle {
  padding-top: 1px;
  background: #e8e8e8;
}
.vtrack {
  flex: 1;
  display: flex;
  flex-direction: column;
}
.vtrack::before {
  content: "";
  flex: 26;
}
.vtrack::after {
  content: "";
  flex: 288;
}
.vthumb {
  flex: 130;
  border: 1px solid #a8a8a8;
  border-radius: 7px;
  background: #f3f3f3;
}
.hscroll {
  grid-area: 2 / 1 / 3 / 3;
  display: flex;
  background: #dcdcdc;
}
.hscroll button {
  flex: 0 0 18px;
  justify-content: center;
}
.hscroll button:last-child {
  flex-basis: 48px;
}
.htrack {
  flex: 1;
  display: flex;
}
.htrack::before {
  content: "";
  flex: 100;
}
.htrack::after {
  content: "";
  flex: 57;
}
.hthumb {
  flex: 858;
  border: 1px solid #a8a8a8;
  border-radius: 8px;
  background: #f3f3f3;
}
.side {
  grid-area: 1 / 3 / 3 / 4;
  display: flex;
  flex-direction: column;
  align-items: center;
  border-left: 1px solid #d4d4d4;
}
.grip {
  width: 16px;
  height: 2px;
  margin: 11px 0 11px;
  border: solid #bbb;
  border-width: 1px 0;
}
.side button {
  flex: 0 0 36px;
}
.side .side-more {
  flex: 0 0 43px;
  width: 38px;
  justify-content: center;
  margin-top: auto;
  padding-top: 6px;
  box-sizing: border-box;
  border-top: 1px solid #cfcfcf;
}

/* status bar */
.status {
  display: flex;
  align-items: stretch;
  height: 29px;
  color: #555;
}
.cell {
  display: flex;
  align-items: center;
  gap: 16px;
  padding: 0 6px 0 10px;
  border-right: 1px solid #dcdcdc;
}
.cell:first-child {
  padding: 0 5px 0 9px;
}
.cell.check {
  gap: 4px;
  padding-right: 10px;
}
.status-right {
  flex: 1;
  display: flex;
  align-items: center;
  justify-content: flex-end;
  padding-right: 15px;
}
.views {
  display: flex;
  align-items: center;
  gap: 2px;
  height: 28px;
  padding-right: 9px;
  border-right: 1px solid #dcdcdc;
}
.views button {
  justify-content: center;
  width: 24px;
  height: 24px;
}
.views .active {
  border-radius: 4px;
  background: #c4c4c4;
}
.percent {
  margin-left: 11px;
  gap: 5px;
}
.zoom-btn {
  justify-content: center;
  width: 34px;
  color: #2b3550;
}
.zoom {
  width: 137px;
  height: 13px;
  margin: 0;
  appearance: none;
  background:
    linear-gradient(#555, #555) 68px 50% / 1px 6px no-repeat,
    linear-gradient(90deg, #555 50%, #999 50%) center / 100% 1px no-repeat;
}
.zoom::-webkit-slider-thumb {
  appearance: none;
  box-sizing: border-box;
  width: 13px;
  height: 13px;
  border: 1px solid #444;
  border-radius: 50%;
  background: #f3f3f3;
}
.fit {
  margin-left: 2px;
  color: #2b3550;
}

.watermark {
  position: absolute;
  right: 56px;
  bottom: 23px;
  pointer-events: none;
}
.mark {
  fill: #fff;
  fill-opacity: 0.8;
  stroke: #d8d8d8;
  stroke-width: 2;
  stroke-opacity: 0.8;
  stroke-linejoin: round;
}
.wm-bai {
  font: 700 46px "Liberation Sans", sans-serif;
}
.wm-du {
  font: 700 26px "Liberation Sans", sans-serif;
}
.wm-cn {
  font: 700 35px "Noto Sans CJK SC", sans-serif;
}
.wm-url {
  font: 25px "Liberation Sans", sans-serif;
  paint-order: stroke;
  fill-opacity: 1;
}
</style>
